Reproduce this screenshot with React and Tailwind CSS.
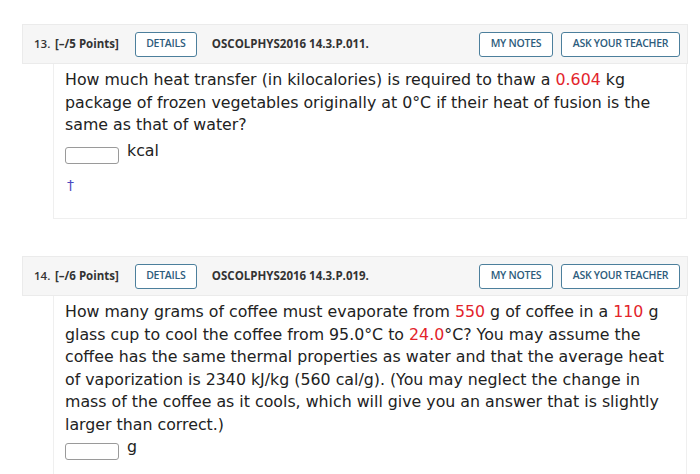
const HeaderBtn = ({ children, className = "" }) => (
  <button
    className={`h-[25px] px-2 rounded-[3px] border border-[#4c7f9c] bg-white text-[10.5px] font-semibold text-[#2d5c7c] tracking-tight ${className}`}
  >
    {children}
  </button>
);

const QuestionHeader = ({ num, points, code }) => (
  <div className="flex items-center h-[40px] ml-[22px] w-[666px] bg-[#f6f6f6] border border-[#ebebeb] pl-[11px] pr-[7px] font-['Open_Sans',sans-serif]">
    <span className="text-[11.5px] font-semibold text-[#333] w-[21px]">{num}</span>
    <span className="text-[11.5px] font-bold text-[#333]">[–/{points} Points]</span>
    <HeaderBtn className="ml-[16px] w-[62px]">DETAILS</HeaderBtn>
    <span className="ml-[15px] text-[11.5px] font-bold text-[#333]">{code}</span>
    <div className="ml-auto flex gap-[8px]">
      <HeaderBtn className="w-[74px]">MY NOTES</HeaderBtn>
      <HeaderBtn className="w-[119px]">ASK YOUR TEACHER</HeaderBtn>
    </div>
  </div>
);

const Red = ({ children }) => <span className="text-[#e3242b]">{children}</span>;

const AnswerRow = ({ unit, className = "" }) => (
  <div className={`flex items-start gap-[8px] ${className}`}>
    <input className="mt-[7px] w-[54px] h-[17px] rounded-[3px] border border-[#9a9a9a] bg-white" />
    <span>{unit}</span>
  </div>
);

export default function App() {
  return (
    <div className="w-[700px] h-[474px] bg-white overflow-hidden pt-[24px] font-['DejaVu_Sans',sans-serif] text-[#222]">
      <QuestionHeader num="13." points="5" code="OSCOLPHYS2016 14.3.P.011." />
      <div className="ml-[53px] w-[634px] h-[155px] border-x border-b border-[#efefef] pl-[11px] pr-[12px] pt-[5px] text-[15.8px] leading-[22.5px]">
        <p>
          How much heat transfer (in kilocalories) is required to thaw a <Red>0.604</Red> kg package of frozen vegetables originally at 0°C if their heat of fusion is the same as that of water?
        </p>
        <AnswerRow unit="kcal" className="mt-[3px]" />
        <div className="mt-[11px] ml-[2px] text-[14px] leading-[20px] text-[#4a4ac0]">†</div>
      </div>

      <div className="mt-[37px]">
        <QuestionHeader num="14." points="6" code="OSCOLPHYS2016 14.3.P.019." />
        <div className="ml-[53px] w-[634px] h-[200px] border-x border-b border-[#efefef] pl-[11px] pr-[12px] pt-[5px] text-[15.8px] leading-[22.5px]">
          <p>
            How many grams of coffee must evaporate from <Red>550</Red> g of coffee in a <Red>110</Red> g glass cup to cool the coffee from 95.0°C to <Red>24.0</Red>°C? You may assume the coffee has the same thermal properties as water and that the average heat of vaporization is 2340 kJ/kg (560 cal/g). (You may neglect the change in mass of the coffee as it cools, which will give you an answer that is slightly larger than correct.)
          </p>
          <AnswerRow unit="g" />
        </div>
      </div>
    </div>
  );
}
